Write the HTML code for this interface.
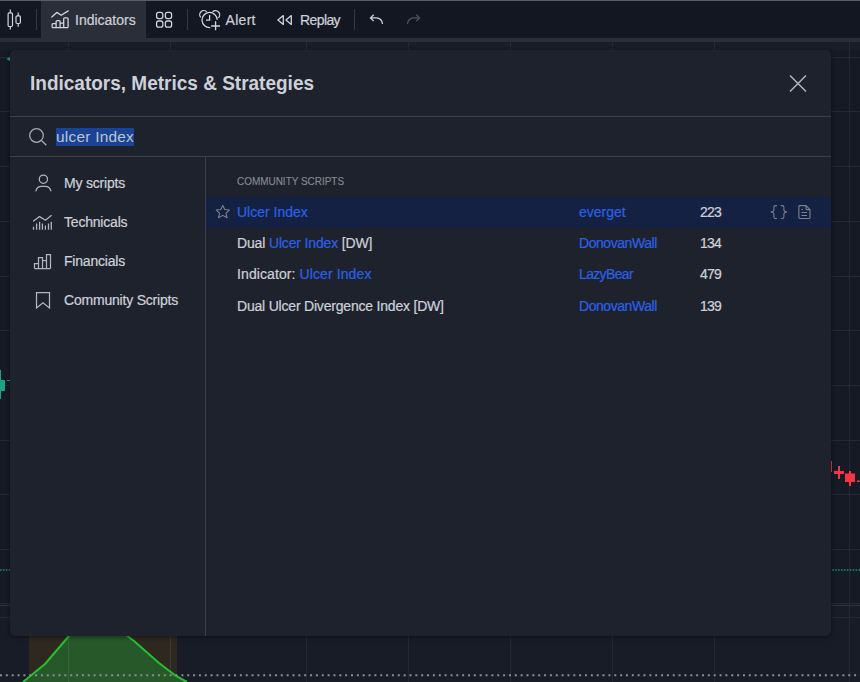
<!DOCTYPE html>
<html><head><meta charset="utf-8">
<style>
*{margin:0;padding:0;box-sizing:border-box}
html,body{width:860px;height:682px;overflow:hidden;background:#161a25;font-family:"Liberation Sans",sans-serif;}
.a{position:absolute}
.t{position:absolute;white-space:pre;line-height:1}
.w{-webkit-text-stroke:0.22px currentColor}
svg{position:absolute;overflow:visible}
</style></head><body>
<!-- chart background + grid -->
<div class="a" style="left:0;top:42px;width:860px;height:640px;background:#161a25"></div>
<svg style="left:0;top:0" width="860" height="682">
 <rect x="0" y="42" width="860" height="8" fill="#191d28"/>
 <rect x="0" y="606" width="860" height="76" fill="#181c27"/>
 <g stroke="#242834" stroke-width="1">
  <path d="M0 57.5H860M0 111.5H860M0 166.5H860M0 221.5H860M0 276.5H860M0 330.5H860M0 385.5H860M0 440.5H860M0 494.5H860M0 549.5H860"/>
  <path d="M68.5 42V682M170.5 42V682M306.5 42V682M408.5 42V682M510.5 42V682M612.5 42V682M714.5 42V682M849.5 42V682"/>
 </g>
 <path d="M0 603.5H860" stroke="#252934"/>
 <path d="M0 605.5H860" stroke="#2e323d"/>
 <path d="M0 617.5H860" stroke="#242834"/>
 <!-- brown box -->
 <rect x="29" y="600" width="148" height="82" fill="#2e2820"/>
 <path d="M68.5 600V682M170.5 600V682" stroke="#3a3a34"/>
 <!-- green area -->
 <path d="M23 682 L34 673 L45 664 L75 629 L118 629 L134 641 L159 663 L176 676 L187 682 Z" fill="#27582a"/>
 <path d="M68.5 636V682" stroke="#33663a"/>
 <path d="M23 682 L34 673 L45 664 L75 629 M118 629 L134 641 L159 663 L176 676 L187 682" fill="none" stroke="#22c22f" stroke-width="2"/>
 <!-- dotted line -->
 <path d="M0 675.3H860" stroke="#8a8d96" stroke-width="2" stroke-dasharray="2 3.85"/>
 <!-- teal dotted -->
 <path d="M0 570H860" stroke="#168d78" stroke-width="1.6" stroke-dasharray="1.6 1.3"/>
 <!-- teal candle left -->
 <rect x="0" y="380" width="5" height="11" fill="#1aa387"/>
 <rect x="0" y="370" width="1" height="29" fill="#1aa387"/>
 <rect x="7" y="380" width="3" height="1" fill="#1aa387"/>
 <polygon points="6.5,59 10,56.8 10,61.2" fill="#1aa387"/>
 <!-- red candles right -->
 <rect x="830" y="461" width="2" height="11" fill="#f23645"/>
 <rect x="834" y="471" width="10" height="3" fill="#f23645"/>
 <rect x="838" y="466" width="2" height="13" fill="#f23645"/>
 <rect x="845" y="473.5" width="10" height="8.5" fill="#f23645"/>
 <rect x="849" y="471" width="2" height="15" fill="#f23645"/>
 <rect x="857" y="480.5" width="3" height="1.5" fill="#f23645"/>
</svg>

<!-- toolbar -->
<div class="a" style="left:0;top:0;width:860px;height:1px;background:#5a5d65"></div>
<div class="a" style="left:0;top:1px;width:860px;height:37px;background:#131722"></div>
<div class="a" style="left:0;top:38px;width:860px;height:4px;background:#2a2e39"></div>
<div class="a" style="left:41px;top:1px;width:105px;height:37px;background:#2a2e39"></div>
<!-- separators -->
<div class="a" style="left:36px;top:9px;width:1px;height:21px;background:#363a45"></div>
<div class="a" style="left:187px;top:9px;width:1px;height:21px;background:#363a45"></div>
<div class="a" style="left:354px;top:9px;width:1px;height:21px;background:#363a45"></div>
<svg style="left:0;top:0" width="860" height="40" fill="none" stroke="#d1d4dc" stroke-width="1">
 <!-- candles -->
 <rect x="8.1" y="12.9" width="4.4" height="13.6" rx="1.2" stroke-width="1.2"/>
 <path d="M10.3 9.6V12.9M10.3 26.5V29.4" stroke-width="1.2"/>
 <rect x="16" y="15.9" width="4.4" height="7.6" rx="1.2" stroke-width="1.2"/>
 <path d="M18.2 12.6V15.9M18.2 23.5V26.8" stroke-width="1.2"/>
 <!-- indicators icon -->
 <path d="M51.8 17L56.8 12.4L61.2 15.3L68.2 10.9" stroke-width="1.3" stroke-linecap="round" stroke-linejoin="round"/>
 <path d="M52.1 27.6V24.6Q52.1 23.6 53.1 23.6H55.1Q56.1 23.6 56.1 24.6V27.6M56.1 27.6V21.7Q56.1 20.7 57.1 20.7H59.1Q60.1 20.7 60.1 21.7V27.6M60.1 23.2H63.7M63.7 27.6V18.8Q63.7 17.8 64.7 17.8H67.1Q68.1 17.8 68.1 18.8V27.6M52.1 27.6H68.1" stroke-width="1.3"/>
 <!-- grid icon -->
 <rect x="156.6" y="12.4" width="6.2" height="6.2" rx="2" stroke-width="1.3"/>
 <rect x="165.4" y="12.4" width="6.2" height="6.2" rx="2" stroke-width="1.3"/>
 <rect x="156.6" y="21" width="6.2" height="6.2" rx="2" stroke-width="1.3"/>
 <rect x="165.4" y="21" width="6.2" height="6.2" rx="2" stroke-width="1.3"/>
 <!-- alert icon -->
 <g stroke-width="1.3">
 <path d="M217.2 19.8A7.6 7.6 0 1 0 210.2 27.6"/>
 <path d="M200.8 17.4A3.9 3.9 0 0 1 206.8 11.9M218.4 17.9A3.9 3.9 0 0 0 212.6 11.9"/>
 <path d="M209.6 15V20.1H206"/>
 <path d="M211.2 26H220M215.6 21.3V30.2"/>
 </g>
 <!-- replay icon -->
 <path d="M283.3 15.6V24.4L277.9 20Z M291.3 15.6V24.4L285.9 20Z" stroke-linejoin="round" stroke-width="1.3"/>
 <!-- undo -->
 <path d="M373.7 14.7L370.5 17.9L373.7 21.1M370.8 17.9H376.5A6 6 0 0 1 382.5 24" stroke-width="1.3"/>
 <path d="M416.3 14.7L419.5 17.9L416.3 21.1M419.2 17.9H413.5A6 6 0 0 0 407.5 24" stroke="#50535e" stroke-width="1.3"/>
</svg>
<div class="t w" style="left:75px;top:13.2px;font-size:14px;color:#cdd0d8">Indicators</div>
<div class="t w" style="left:225.5px;top:13.2px;font-size:14px;letter-spacing:0.3px;color:#cdd0d8">Alert</div>
<div class="t w" style="left:300px;top:13.2px;font-size:14px;letter-spacing:-0.6px;color:#cdd0d8">Replay</div>

<!-- dialog -->
<div class="a" style="left:10px;top:50px;width:821px;height:586px;background:#1e222d;border-radius:5px;box-shadow:0 1px 4px rgba(0,0,0,0.5)"></div>
<div class="t" style="left:30px;top:74.2px;font-size:19px;font-weight:700;color:#cdd0d8;transform-origin:0 0;transform:scale(1,1.03)">Indicators, Metrics &amp; Strategies</div>
<svg style="left:0;top:0" width="860" height="682" fill="none">
 <path d="M790 75.5L806 91.5M806 75.5L790 91.5" stroke="#b2b5be" stroke-width="1.5"/>
 <path d="M10 116.5H831M10 156.5H831" stroke="#3c404b"/>
 <path d="M205.5 157V636" stroke="#3a3e49"/>
 <!-- search icon -->
 <circle cx="36.5" cy="135.5" r="6.8" stroke="#a5a8b1" stroke-width="1.3"/>
 <path d="M41.5 140.5L46.3 145.3" stroke="#a5a8b1" stroke-width="1.3"/>
</svg>
<div class="a" style="left:56px;top:128.1px;width:78px;height:18.2px;background:#1a4396"></div>
<div class="t" style="left:56px;top:129.4px;font-size:15.4px;letter-spacing:0.25px;color:#bfc2cb">ulcer Index</div>

<!-- sidebar -->
<svg style="left:0;top:0" width="210" height="320" fill="none" stroke="#b2b5be" stroke-width="1.25">
 <circle cx="43.4" cy="179.2" r="4.1"/>
 <path d="M35.9 190.8C36.6 188 38.6 186.3 41.6 186.3H45.2C48.2 186.3 50.2 188 50.9 190.8" stroke-linecap="round"/>
 <path d="M33.6 221L39.5 216.6L45.4 220.2L51.3 215.6" stroke-width="1.3" stroke-linejoin="round" stroke-linecap="round"/>
 <path d="M33.5 229.7V226.7M36.6 229.7V223.6M39.6 229.7V221.7M42.4 229.7V223.6M45.4 229.7V225.5M48.5 229.7V223.6M51.3 229.7V221.7" stroke-width="1.3"/>
 <path d="M34.5 268.5V263.5H38.5V268.5M38.5 268.5V257.5H42.5V268.5M42.5 268.5V260.5H46.5V268.5M46.5 268.5V254.5H50.5V268.5M34.5 268.5H50.5"/>
 <path d="M36.5 308V292.5H49.5V308L43 302.8Z" stroke-linejoin="miter"/>
</svg>
<div class="t w" style="left:64px;top:176.2px;font-size:14px;letter-spacing:-0.2px;color:#cdd0d8">My scripts</div>
<div class="t w" style="left:64px;top:215.2px;font-size:14px;letter-spacing:-0.2px;color:#cdd0d8">Technicals</div>
<div class="t w" style="left:64px;top:253.7px;font-size:14px;letter-spacing:-0.2px;color:#cdd0d8">Financials</div>
<div class="t w" style="left:64px;top:293.2px;font-size:14px;letter-spacing:-0.2px;color:#cdd0d8">Community Scripts</div>

<!-- list -->
<div class="t w" style="left:237px;top:175.8px;font-size:11.5px;color:#868993;-webkit-text-stroke:0.15px #868993;transform-origin:0 0;transform:scaleX(0.865)">COMMUNITY SCRIPTS</div>
<div class="a" style="left:206px;top:197px;width:625px;height:30.5px;background:#142142"></div>
<svg style="left:0;top:0" width="860" height="320" fill="none" stroke="#80838f" stroke-width="1.05">
 <path d="M222.8 205.5L224.8 209.6L229.4 210.1L226 213.2L227.1 217.7L222.8 215.4L218.5 217.7L219.6 213.2L216.2 210.1L220.8 209.6Z" stroke-linejoin="round"/>
 <path d="M777 205.6H775.6Q773.9 205.6 773.9 207.3V209.9Q773.9 211.6 771 212Q773.9 212.4 773.9 214.1V216.7Q773.9 218.4 775.6 218.4H777" stroke-linejoin="round"/>
 <path d="M780.8 205.6H782.2Q783.9 205.6 783.9 207.3V209.9Q783.9 211.6 786.8 212Q783.9 212.4 783.9 214.1V216.7Q783.9 218.4 782.2 218.4H780.8" stroke-linejoin="round"/>
 <path d="M799.4 205.6H806L810 209.6V217.6Q810 218.4 809.2 218.4H799.8Q798.9 218.4 798.9 217.6V206.4Q798.9 205.6 799.6 205.6Z M806 205.6V208.6Q806 209.6 807 209.6H810 M801.5 209.5H803 M801.5 212.5H807 M801.5 215.5H807" stroke-linejoin="round"/>
</svg>
<div class="t w" style="left:237px;top:204.6px;font-size:14px;color:#2a60e8">Ulcer Index</div>
<div class="t w" style="left:579px;top:204.6px;font-size:14px;color:#2a60e8">everget</div>
<div class="t w" style="left:700px;top:204.6px;font-size:14px;letter-spacing:-0.8px;color:#cdd0d8">223</div>

<div class="t w" style="left:237px;top:236.2px;font-size:14px;letter-spacing:-0.15px;color:#cdd0d8">Dual <span style="color:#2a60e8">Ulcer Index</span> [DW]</div>
<div class="t w" style="left:579px;top:236.2px;font-size:14px;letter-spacing:-0.45px;color:#2a60e8">DonovanWall</div>
<div class="t w" style="left:700px;top:236.2px;font-size:14px;letter-spacing:-0.8px;color:#cdd0d8">134</div>

<div class="t w" style="left:237px;top:267.2px;font-size:14px;letter-spacing:0.1px;color:#cdd0d8">Indicator: <span style="color:#2a60e8">Ulcer Index</span></div>
<div class="t w" style="left:579px;top:267.2px;font-size:14px;letter-spacing:-0.65px;color:#2a60e8">LazyBear</div>
<div class="t w" style="left:700px;top:267.2px;font-size:14px;letter-spacing:-0.8px;color:#cdd0d8">479</div>

<div class="t w" style="left:237px;top:299px;font-size:14px;letter-spacing:-0.2px;color:#cdd0d8">Dual Ulcer Divergence Index [DW]</div>
<div class="t w" style="left:579px;top:299px;font-size:14px;letter-spacing:-0.45px;color:#2a60e8">DonovanWall</div>
<div class="t w" style="left:700px;top:299px;font-size:14px;letter-spacing:-0.8px;color:#cdd0d8">139</div>
</body></html>
